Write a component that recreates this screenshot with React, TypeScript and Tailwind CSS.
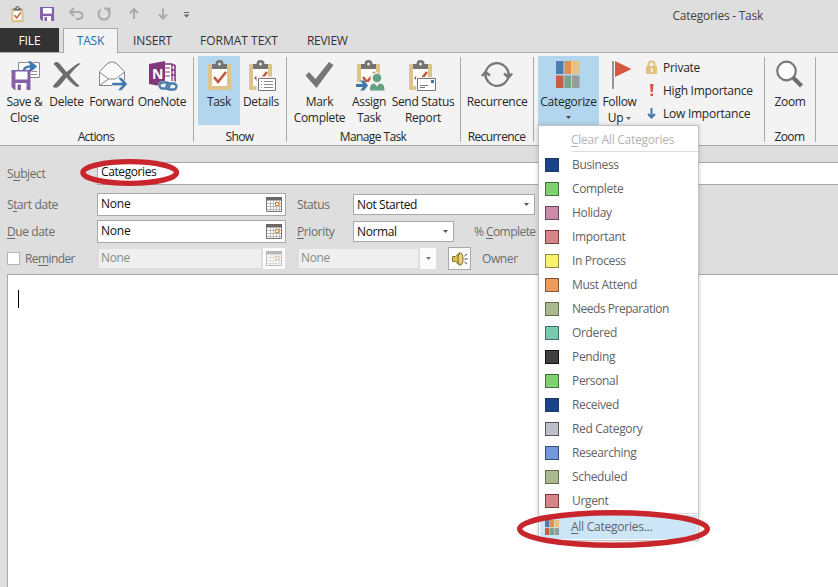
import React from "react";

function Clipboard() {
  return (
    <>
      <rect x="5" y="4" width="23" height="26" rx="1" fill="#dcc48c" />
      <path d="M9 6h15v20H9z" fill="#fffdf9" />
      <path d="M9 4h3.500a4 4 0 0 1 8 0H24v5H9z" fill="#737373" />
      <circle cx="16.500" cy="4" r="1.500" fill="#e4e4e4" />
      <path d="M11 17l4 5 8-10" fill="none" stroke="#bc5940" strokeWidth="2.600" />
    </>
  );
}

function Floppy({ fill = "#8560a8" }: { fill?: string }) {
  return (
    <>
      <path d="M0 0h19v20H3l-3-3z" fill={fill} />
      <path d="M4 1.500h12v8H4z" fill="#fff" />
      <path d="M4 13h11v7H4z" fill="#fff" />
      <path d="M6 14.500h3.500V20H6z" fill={fill} />
    </>
  );
}

function Icon({ children }: { children: React.ReactNode }) {
  return (
    <svg width="32" height="32" viewBox="0 0 32 32" className="shrink-0 overflow-visible">
      {children}
    </svg>
  );
}

const saveIcon = (
  <Icon>
    <path d="M9.500 2.500h21v15h-21z" fill="#fdfdfd" stroke="#8c8c8c" />
    <path d="M22 11.500h6M22 14.500h6" stroke="#8c8c8c" />
    <path d="M13 13c0-6 4-8 8-8l-3-4h4l6.500 5.500-6.500 5.500h-4l3-4c-3 0-5 1-5 5z" fill="#3f78ae" stroke="#fff" strokeWidth=".6" />
    <g transform="translate(2.500 10)">
      <Floppy />
    </g>
  </Icon>
);

const deleteIcon = (
  <Icon>
    <path d="M2.500 4c2-3 4-2.500 6-.5l7 8.500 9-7c3-2.500 5-2 5-1.200-4 3-8 7.200-11 11.200 3 4 6 7.500 10 11-2 1.500-3 .7-5-.5-3-2.500-6-5.500-8-8-4 5-7 9-9.500 10-2 .6-5-.2-4-1.500 3-3.500 6.500-7.500 10-11.500C8 10.500 6 7 2.500 4z" fill="#6d6d6d" />
  </Icon>
);

const forwardIcon = (
  <Icon>
    <path d="M3.500 11.500 12 3q4-2.500 8 0l8.500 8.500v14h-25z" fill="#fbfbfb" stroke="#858585" />
    <path d="M3.500 12l9 7h7l9-7M3.500 25.500l9-6.500" fill="none" stroke="#858585" />
    <path d="M16 22.500h10l-4.500-5h4l6 6.500-6 6.500h-4l4.500-5H16z" fill="#4079b0" stroke="#f3f3f3" strokeWidth=".6" />
  </Icon>
);

const oneNoteIcon = (
  <Icon>
    <path d="M17 4h9v19h-9z" fill="#fff" stroke="#80397b" strokeWidth="1.300" />
    <path d="M25 5h4M25 10h4M25 15h4M29 5v17" stroke="#80397b" strokeWidth="1.600" />
    <path d="M19 8h5M19 12h5M19 16h5" stroke="#80397b" />
    <path d="M3 4 19 1v26L3 24z" fill="#80397b" />
    <text x="6" y="19" className="fill-white font-['Open_Sans',sans-serif] text-[14px] font-bold">N</text>
    <rect x="12" y="21" width="20" height="10" rx="5" fill="#f3f3f3" />
    <g fill="none" stroke="#4c7daf" strokeWidth="2.300">
      <rect x="13.500" y="22.500" width="10" height="6" rx="3" />
      <rect x="20.500" y="23.500" width="10" height="6" rx="3" />
    </g>
  </Icon>
);

const taskIcon = (
  <Icon>
    <Clipboard />
  </Icon>
);

const detailsIcon = (
  <Icon>
    <g transform="translate(-1 0)">
      <Clipboard />
    </g>
    <path d="M13.500 18.500h17v12h-17z" fill="#fff" stroke="#f3f3f3" strokeWidth="4" />
    <path d="M13.500 18.500h17v12h-17z" fill="#fff" stroke="#777" />
    <path d="M16 21.500h1M16 24.500h1M16 27.500h1M19 21.500h9M19 24.500h9M19 27.500h9" stroke="#888" />
  </Icon>
);

const markIcon = (
  <Icon>
    <path d="M1.500 15.500 5 12l6.500 7L25 2l4.500 3L12.500 28z" fill="#777" />
  </Icon>
);

const assignIcon = (
  <Icon>
    <g transform="translate(-1 0)">
      <Clipboard />
    </g>
    <path d="M1 22h14v9H1z" fill="#f3f3f3" />
    <path d="M14 31v-5l4-4-1-8 7-2 6 6-2 5 3 4v4z" fill="#f3f3f3" />
    <circle cx="24" cy="18" r="4.300" fill="#64a083" />
    <path d="M17 30.500c0-5 1-6.500 4.500-7l2.500 3 2.500-3c4 .5 5 2 5 7z" fill="#64a083" />
    <path d="M3 24h7l-3-3.500h4l4 5-4 5H7l3-3.500H3z" fill="#3e76a9" />
  </Icon>
);

const reportIcon = (
  <Icon>
    <g transform="translate(-3 0)">
      <Clipboard />
    </g>
    <path d="M9 17h21v15H9z" fill="#f3f3f3" />
    <path d="M10.500 18.500h18v12h-18z" fill="#fff" stroke="#777" />
    <path d="M24 20h3v3h-3z" fill="#3e76a9" />
    <path d="M13 25.500h8M13 27.500h5" stroke="#777" />
  </Icon>
);

const recurrenceIcon = (
  <Icon>
    <g fill="none" stroke="#777" strokeWidth="2.400">
      <path d="M4.500 16A11.500 11.500 0 0 1 24.500 7M27.500 13A11.500 11.500 0 0 1 7.500 22" />
      <path d="M24.500 7A11.500 11.500 0 0 1 27.500 17M7.500 22A11.500 11.500 0 0 1 4.500 13" />
      <path d="M.8 16l3.700-4 4.500 3.500M23 13.500l4.500 4 3.700-4" />
    </g>
  </Icon>
);

function Tiles() {
  return (
    <>
      <path d="M0 0h7.500v13H0z" fill="#4c7cb0" />
      <path d="M8.500 0H15v13H8.500z" fill="#d99150" />
      <path d="M16 0h7.500v13H16z" fill="#e5c283" />
      <path d="M0 14.500h7.500v12.500H0z" fill="#ca5b45" />
      <path d="M8.500 14.500H15v12.500H8.500z" fill="#72a58a" />
      <path d="M16 14.500h7.500v12.500H16z" fill="#959b9e" />
    </>
  );
}

const categorizeIcon = (
  <Icon>
    <g transform="translate(3 1)">
      <Tiles />
    </g>
  </Icon>
);

const flagIcon = (
  <Icon>
    <path d="M9 1v28" stroke="#777" strokeWidth="1.500" />
    <path d="M11 1l16.500 8L11 17z" fill="#d6593f" />
  </Icon>
);

const zoomIcon = (
  <Icon>
    <circle cx="12.500" cy="11" r="9.300" fill="#fbfbfb" stroke="#777" strokeWidth="2.200" />
    <path d="M19 17.500l8.500 8.500" stroke="#6f6f6f" strokeWidth="4.200" />
  </Icon>
);

function Caret({ className = "" }: { className?: string }) {
  return (
    <svg width="5" height="3" viewBox="0 0 5 3" className={"shrink-0 " + className}>
      <path d="M0 0h5L2.500 3z" fill="currentColor" />
    </svg>
  );
}

type ButtonProps = {
  icon: React.ReactNode;
  width: string;
  first: React.ReactNode;
  second?: React.ReactNode;
  active?: boolean;
};

function RibbonButton({ icon, width, first, second, active }: ButtonProps) {
  return (
    <div
      className={
        "flex h-[69px] shrink-0 flex-col items-center pt-1 tracking-[-0.3px] whitespace-nowrap " +
        width +
        (active ? " bg-[#b1d6ed]" : "")
      }
    >
      {icon}
      <div className="mt-[2px] flex h-4 items-center leading-4">{first}</div>
      <div className="flex h-4 items-center leading-4">{second}</div>
    </div>
  );
}

function Group({ width, label, children }: { width: string; label?: React.ReactNode; children: React.ReactNode }) {
  return (
    <div className={"mt-1 flex h-[85px] shrink-0 flex-col border-r border-[#a9a9a9] " + width}>
      <div className="-mt-px flex justify-center">{children}</div>
      <div className="mt-1 flex h-4 items-center justify-center pr-px leading-4 font-medium tracking-[-0.6px]">{label}</div>
    </div>
  );
}

function Calendar({ dim = false }: { dim?: boolean }) {
  return (
    <svg width="16" height="15" viewBox="0 0 16 15" className={"shrink-0 " + (dim ? "opacity-45" : "")}>
      <path d="M.5.5h15v14H.5z" fill="#fff" stroke="#777" />
      <path d="M0 0h16v3.500H0z" fill="#6e6666" />
      <path d="M4.500 4v10M7.500 4v10M10.500 4v10M13.500 4v10M1 6.500h14M1 9.500h14M1 12.500h14" stroke="#bbb" />
      <path d="M9.500 5.500h3v3h-3z" fill="#fff" stroke="#c98236" />
    </svg>
  );
}

function DateBox({ value }: { value: string }) {
  return (
    <div className="flex h-[23px] w-[189px] shrink-0 items-center justify-between border border-[#a8a8a8] bg-white pr-[3px] pl-[3px] text-[#111]">
      <span className="-mt-[2px] tracking-[-0.2px]">{value}</span>
      <Calendar />
    </div>
  );
}

const u = (letter: string) => <span className="underline underline-offset-2">{letter}</span>;

const categories = [
  ["Business", "border-[#1c3660] bg-[#1b458a]"],
  ["Complete", "border-[#43703f] bg-[#7fcf73]"],
  ["Holiday", "border-[#6e4459] bg-[#c98ba9]"],
  ["Important", "border-[#753b3f] bg-[#d78586]"],
  ["In Process", "border-[#8f8a45] bg-[#faf26c]"],
  ["Must Attend", "border-[#7f5535] bg-[#ec9b5a]"],
  ["Needs Preparation", "border-[#636d4d] bg-[#a9b98b]"],
  ["Ordered", "border-[#416f65] bg-[#77c9b0]"],
  ["Pending", "border-[#111] bg-[#404040]"],
  ["Personal", "border-[#43703f] bg-[#7fcf73]"],
  ["Received", "border-[#1c3660] bg-[#1b458a]"],
  ["Red Category", "border-[#55555f] bg-[#bfbfc8]"],
  ["Researching", "border-[#354d7d] bg-[#7399dc]"],
  ["Scheduled", "border-[#636d4d] bg-[#a9b98b]"],
  ["Urgent", "border-[#753b3f] bg-[#d78586]"],
];

function QuickAccess() {
  return (
    <svg width="200" height="28" viewBox="0 0 200 28" className="shrink-0">
      <g transform="translate(8.500 6) scale(.54 .54)">
        <Clipboard />
      </g>
      <g transform="translate(40 7) scale(.74 .7)">
        <Floppy />
      </g>
      <g fill="none" stroke="#ababab" strokeWidth="2">
        <path d="M74 8l-4 4 4 4M70.500 12H78c6 0 6 7 0 7h-2" />
        <path d="M101 9.500a5.500 5.500 0 1 0 6 0M104 8.500h5.500v5" />
        <path d="M134 19V9M130 13l4-4 4 4M163 8.500v10M159 14.500l4 4 4-4" />
      </g>
      <path d="M184 12.500h5" stroke="#666" />
      <path d="M183.500 14.500h6l-3 3z" fill="#666" />
    </svg>
  );
}

function Ribbon() {
  return (
    <div className="flex h-[93px] shrink-0 border-b border-[#a8a8a8] bg-[#f3f3f3] text-[#262626]">
      <Group width="w-[194px]" label="Actions">
        <RibbonButton width="w-[43px]" icon={saveIcon} first="Save &" second="Close" />
        <RibbonButton width="w-[41px]" icon={deleteIcon} first="Delete" />
        <RibbonButton width="w-[49px]" icon={forwardIcon} first="Forward" />
        <RibbonButton width="w-[54px] pr-[2px]" icon={oneNoteIcon} first="OneNote" />
      </Group>
      <Group width="w-[93px]" label="Show">
        <RibbonButton width="w-[42px]" icon={taskIcon} first="Task" active />
        <RibbonButton width="w-[42px]" icon={detailsIcon} first="Details" />
      </Group>
      <Group width="w-[174px]" label="Manage Task">
        <RibbonButton width="w-[56px]" icon={markIcon} first="Mark" second="Complete" />
        <RibbonButton width="w-[43px]" icon={assignIcon} first="Assign" second="Task" />
        <RibbonButton width="w-[65px]" icon={reportIcon} first="Send Status" second="Report" />
      </Group>
      <Group width="w-[73px]" label="Recurrence">
        <RibbonButton width="w-[63px]" icon={recurrenceIcon} first="Recurrence" />
      </Group>
      <Group width="w-[231px]">
        <RibbonButton width="w-[61px]" icon={categorizeIcon} first="Categorize" second={<Caret className="text-[#444]" />} active />
        <RibbonButton
          width="w-[41px]"
          icon={flagIcon}
          first="Follow"
          second={
            <>
              Up
              <Caret className="ml-[3px] text-[#666]" />
            </>
          }
        />
        <div className="flex w-[120px] flex-col pl-[5px] tracking-[-0.25px] whitespace-nowrap">
          <div className="flex h-[23px] items-center gap-[5px]">
            <svg width="13" height="15" viewBox="0 0 13 15">
              <path d="M3.500 7V4.500a3 3 0 0 1 6 0V7" fill="none" stroke="#e3c180" strokeWidth="2" />
              <path d="M1 6h11v8H1z" fill="#e3c180" />
              <path d="M6 8h1.500v4H6z" fill="#fff" />
            </svg>
            Private
          </div>
          <div className="flex h-[23px] items-center gap-[5px]">
            <svg width="13" height="15" viewBox="0 0 13 15">
              <path d="M5 1h3.500L7.800 9H5.700zM5.500 10.500H8V13H5.500z" fill="#cf593f" />
            </svg>
            High Importance
          </div>
          <div className="flex h-[23px] items-center gap-[5px]">
            <svg width="13" height="15" viewBox="0 0 13 15">
              <path d="M6.500 2v9.500M3 8l3.500 3.500L10 8" fill="none" stroke="#4479ad" strokeWidth="2" />
            </svg>
            Low Importance
          </div>
        </div>
      </Group>
      <Group width="w-[51px]" label="Zoom">
        <RibbonButton width="w-[41px]" icon={zoomIcon} first="Zoom" />
      </Group>
    </div>
  );
}

function TaskForm() {
  return (
    <div className="flex h-[128px] shrink-0 flex-col bg-[#dedede] pt-4 tracking-[-0.4px] text-[#6b6b6b]">
      <div className="flex h-[23px] items-center pl-[7px]">
        <div className="w-[90px] shrink-0">S{u("u")}bject</div>
        <div className="flex h-[23px] flex-1 items-center border-y border-l border-[#a8a8a8] bg-white pl-[3px] text-[#111]">
          <span className="-mt-[3px]">Categories</span>
        </div>
      </div>
      <div className="mt-2 flex h-[23px] items-center pl-[7px]">
        <div className="w-[90px] shrink-0">S{u("t")}art date</div>
        <DateBox value="None" />
        <div className="ml-[11px] w-[56px] shrink-0">Status</div>
        <div className="flex h-[21px] w-[182px] shrink-0 items-center justify-between border border-[#a8a8a8] bg-white px-[3px] pr-[5px] text-[#111]">
          Not Started
          <Caret className="text-[#555]" />
        </div>
      </div>
      <div className="mt-1 flex h-[23px] items-center pl-[7px]">
        <div className="w-[90px] shrink-0">{u("D")}ue date</div>
        <DateBox value="None" />
        <div className="ml-[11px] w-[56px] shrink-0">{u("P")}riority</div>
        <div className="flex h-[21px] w-[101px] shrink-0 items-center justify-between border border-[#a8a8a8] bg-white px-[3px] pr-[5px] text-[#111]">
          Normal
          <Caret className="text-[#555]" />
        </div>
        <div className="ml-5 tracking-[-0.55px] whitespace-nowrap">% {u("C")}omplete</div>
      </div>
      <div className="mt-[3px] flex h-[25px] items-center pl-[7px]">
        <div className="size-[13px] shrink-0 border border-[#b4b4b4] bg-white" />
        <div className="ml-[5px] w-[74px] shrink-0 tracking-[-0.6px]">Re{u("m")}inder</div>
        <div className="flex h-[19px] w-[162px] shrink-0 items-center bg-[#efefef] pl-[2px] text-[#8a8a8a]">
          <span className="-mt-[2px]">None</span>
        </div>
        <div className="ml-[2px] flex h-[21px] w-[22px] shrink-0 items-center justify-center bg-[#fbfbfb]">
          <Calendar dim />
        </div>
        <div className="ml-[14px] flex h-[19px] w-[119px] shrink-0 items-center bg-[#efefef] pl-[2px] text-[#8a8a8a]">
          <span className="-mt-[2px]">None</span>
        </div>
        <div className="ml-[2px] flex h-[21px] w-4 shrink-0 items-center justify-center bg-[#fbfbfb]">
          <Caret className="text-[#777]" />
        </div>
        <div className="ml-3 flex size-[23px] shrink-0 items-center justify-center border border-[#a8a8a8] bg-[#fbfbfb]">
          <svg width="16" height="14" viewBox="0 0 16 14">
            <path d="M.5 4.500h3L7.500.8v12.400L3.500 9.500h-3z" fill="#d9bd53" stroke="#8a7630" />
            <ellipse cx="8.500" cy="7" rx="2.500" ry="6" fill="#e8d27a" stroke="#7d6a2a" />
            <path d="M12.500 4 15 2M12.500 7H15.500M12.500 10l2.500 2" stroke="#444" />
          </svg>
        </div>
        <div className="ml-[11px]">Owner</div>
      </div>
    </div>
  );
}

function CategoryMenu() {
  return (
    <div className="absolute top-[125px] left-[538px] flex h-[416px] w-[161px] flex-col border border-[#c3c3c3] bg-white pt-[2px] tracking-[-0.34px] text-[#636363] shadow-[0_0_5px_rgba(0,0,0,0.18)]">
      <div className="flex h-[23px] items-center pl-8 text-[#b3b3b3]">
        <span className="tracking-[-0.25px]">{u("C")}lear All Categories</span>
      </div>
      <div className="ml-[33px] h-px shrink-0 bg-[#dcdcdc]" />
      <div className="mt-px flex flex-col">
        {categories.map(([name, swatch]) => (
          <div key={name} className="flex h-6 items-center pl-[6px]">
            <div className={"mr-[13px] size-[14px] shrink-0 border " + swatch} />
            <span className={name === "Needs Preparation" ? "tracking-[-0.48px]" : ""}>{name}</span>
          </div>
        ))}
      </div>
      <div className="ml-[33px] h-px shrink-0 bg-[#dcdcdc]" />
      <div className="mx-px mt-px flex h-6 items-center bg-[#cde6f7] pl-[5px]">
        <svg width="14" height="15" viewBox="0 0 23.500 27" preserveAspectRatio="none" className="mr-3 shrink-0">
          <Tiles />
        </svg>
        <span className="tracking-[-0.25px]">{u("A")}ll Categories...</span>
      </div>
    </div>
  );
}

export default function App() {
  return (
    <div className="relative flex h-[587px] w-[838px] flex-col overflow-hidden bg-[#dedede] font-['Open_Sans','Noto_Sans',sans-serif] text-[12px] leading-4 text-[#333]">
      <div className="flex h-7 shrink-0 items-center justify-between pr-[75px]">
        <QuickAccess />
        <div className="mt-[3px] tracking-[-0.25px] text-[#444]">Categories - Task</div>
      </div>
      <div className="flex h-[25px] shrink-0 tracking-[-0.1px]">
        <div className="flex h-[25px] w-[59px] items-center justify-center border-b border-[#a8a8a8] bg-[#333] pt-[2px] text-white">FILE</div>
        <div className="w-1 border-b border-[#a8a8a8]" />
        <div className="flex w-[55px] items-center justify-center border-x border-t border-[#a8a8a8] bg-[#f3f3f3] font-medium text-[#1f6fae]">
          TASK
        </div>
        <div className="flex flex-1 items-center border-b border-[#a8a8a8] pt-[2px] pl-[15px]">
          <span className="w-[67px]">INSERT</span>
          <span className="w-[107px] tracking-normal">FORMAT TEXT</span>
          <span className="tracking-[-0.3px]">REVIEW</span>
        </div>
      </div>
      <Ribbon />
      <TaskForm />
      <div className="ml-[7px] flex-1 border-t border-l border-[#a8a8a8] bg-white pt-[15px] pl-[10px]">
        <div className="h-[18px] w-px bg-black" />
      </div>
      <CategoryMenu />
      <svg width="104" height="32" viewBox="0 0 104 32" className="absolute top-[156px] left-[78px]">
        <ellipse cx="51.700" cy="16.500" rx="46.800" ry="10.900" fill="none" stroke="#c9252d" strokeWidth="5.400" />
      </svg>
      <svg width="200" height="46" viewBox="0 0 200 46" className="absolute top-[506px] left-[514px]">
        <ellipse cx="99.500" cy="23" rx="93.800" ry="16.300" fill="none" stroke="#c9252d" strokeWidth="5.400" />
      </svg>
    </div>
  );
}
